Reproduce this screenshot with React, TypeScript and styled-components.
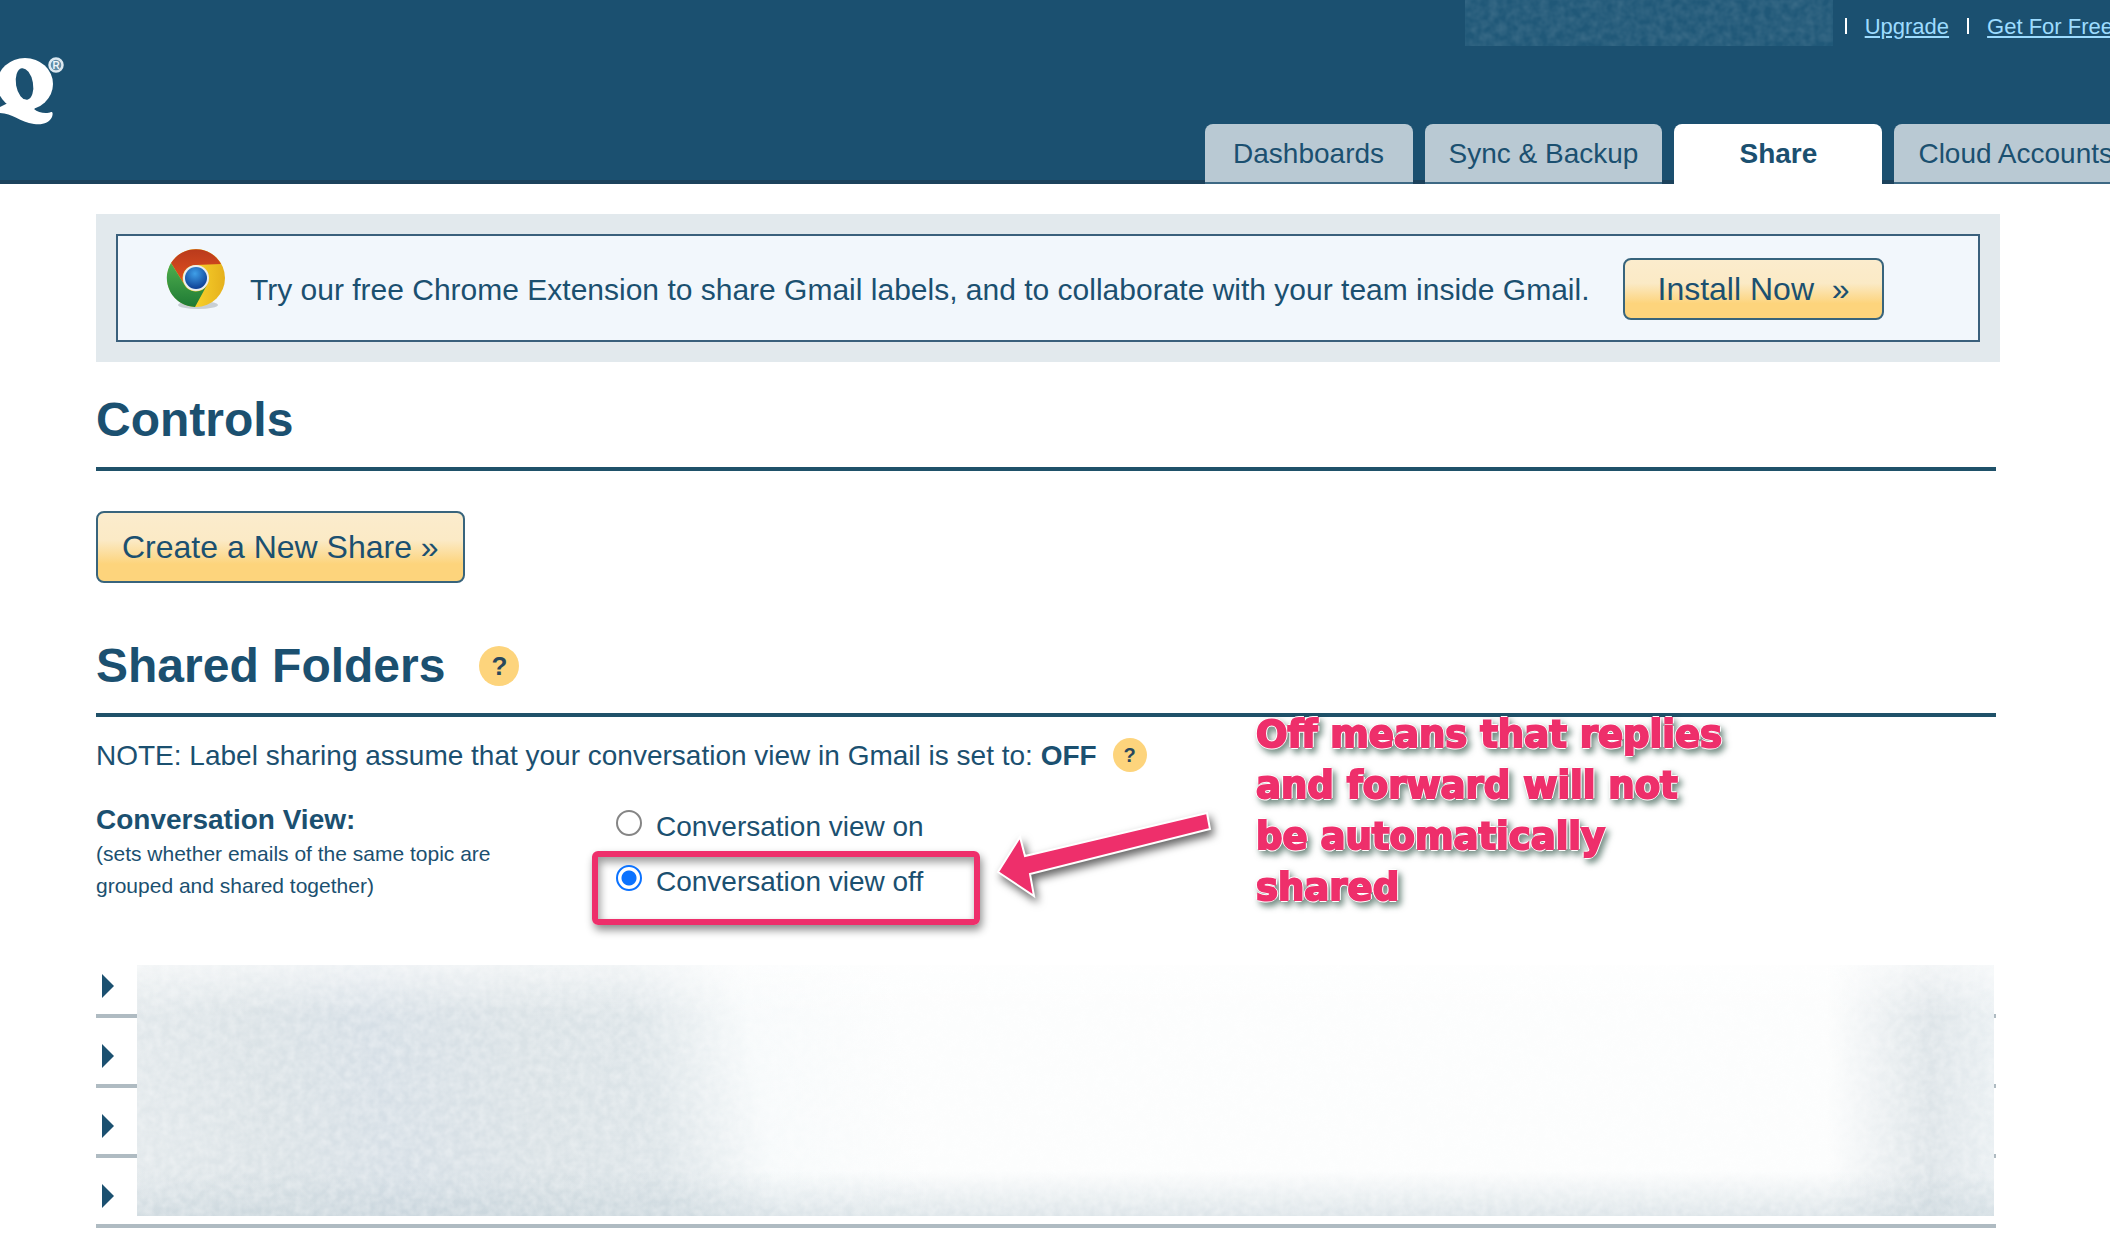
import React, { useState } from "react";
import styled, { createGlobalStyle, css } from "styled-components";

const navy = "#1b5070";
const pink = "#ee2f6b";
const amber = "#fdd47c";

const GlobalStyle = createGlobalStyle`
  *, *::before, *::after { box-sizing: border-box; }
  html, body { margin: 0; }
  body {
    background: #fff;
    color: ${navy};
    font-family: "Liberation Sans", Arial, Helvetica, sans-serif;
    font-size: 28px;
    line-height: 32px;
    overflow-x: hidden;
  }
`;

const Header = styled.header`
  display: flex;
  justify-content: space-between;
  height: 184px;
  background: ${navy};
  border-bottom: 4px solid #1c425c;
  overflow-x: clip;
`;

const LogoLink = styled.a`
  display: block;
  margin-top: 54px;
  height: 72px;
`;

const HeaderRight = styled.div`
  display: flex;
  flex-direction: column;
  justify-content: space-between;
  align-items: flex-end;
`;

const AccountBar = styled.div`
  display: flex;
  align-items: center;
  height: 46px;
  margin-right: -3px;
  font-size: 22px;
`;

const HiddenName = styled.div`
  align-self: stretch;
  width: 368px;
  margin-right: 12px;
  position: relative;
  overflow: hidden;
  background: #205878;
`;

const Separator = styled.span`
  width: 2px;
  height: 16px;
  margin-top: 6px;
  background: #fff;
`;

const AccountLink = styled.a`
  margin: 8px 18px 0;
  line-height: 24px;
  color: #9ddcff;
  white-space: nowrap;
  text-decoration: underline;
  text-underline-offset: 2px;
  &:last-child { margin-right: 0; }
`;

const Tabs = styled.nav`
  display: flex;
  gap: 12px;
  margin: 0 -27px -4px 0;
`;

const Tab = styled.a<{ $active?: boolean }>`
  min-width: 208px;
  height: 60px;
  padding: 14px 24px 0;
  border-radius: 8px 8px 0 0;
  border-bottom: 2px solid #3d6984;
  background: #b9c9d3;
  color: ${navy};
  text-align: center;
  text-decoration: none;
  white-space: nowrap;
  ${(p) =>
    p.$active &&
    css`
      background: #fff;
      border-bottom-color: #fff;
      font-weight: bold;
    `}
`;

const Main = styled.main`
  padding: 30px 110px 0 96px;
`;

const Banner = styled.aside`
  padding: 20px;
  background: #e2e9ed;
`;

const BannerInner = styled.div`
  display: flex;
  align-items: flex-start;
  height: 108px;
  border: 2px solid #3a607c;
  background: #f2f7fc;
  padding: 12px 48px 0;
`;

const BannerText = styled.p`
  margin: 26px 34px 0 22px;
  font-size: 30px;
  white-space: nowrap;
`;

const GoldButton = styled.button<{ $small?: boolean }>`
  height: ${(p) => (p.$small ? "62px" : "72px")};
  margin-top: ${(p) => (p.$small ? "10px" : "0")};
  padding: 0 ${(p) => (p.$small ? "32px" : "24px")};
  border: 2px solid #38647c;
  border-radius: 8px;
  background: linear-gradient(#fbeccd 0%, #fbeac6 40%, ${amber} 75%, ${amber} 100%);
  color: ${navy};
  font: inherit;
  font-size: 32px;
  white-space: pre;
`;

const Section = styled.section<{ $top: number }>`
  margin: ${(p) => p.$top}px 4px 0 0;
`;

const Heading = styled.div`
  display: flex;
  align-items: center;
  gap: 34px;
  height: 80px;
  padding-bottom: 18px;
  border-bottom: 4px solid #1f5169;
  h2 {
    margin: 0;
    font-size: 48px;
    line-height: 56px;
  }
`;

const HelpButton = styled.button<{ $small?: boolean }>`
  width: ${(p) => (p.$small ? 34 : 40)}px;
  height: ${(p) => (p.$small ? 34 : 40)}px;
  padding: 0;
  border: 0;
  border-radius: 50%;
  background: ${amber};
  color: #28485c;
  font: inherit;
  font-weight: bold;
  font-size: ${(p) => (p.$small ? 20 : 26)}px;
`;

const ControlsBody = styled.div`
  padding-top: 40px;
`;

const Note = styled.p`
  display: flex;
  align-items: flex-end;
  gap: 16px;
  margin: 0;
  padding-top: 21px;
`;

const Setting = styled.fieldset`
  display: grid;
  grid-template-columns: 496px 388px 1fr;
  min-height: 144px;
  margin: 32px 0 0;
  padding: 0;
  border: 0;
  position: relative;
`;

const SettingTitle = styled.div`
  strong { display: block; }
  small {
    display: block;
    width: 400px;
    padding-top: 2px;
    font-size: 21px;
    line-height: 32px;
  }
`;

const Options = styled.div`
  padding-top: 6px;
`;

const Option = styled.label<{ $marked?: boolean }>`
  display: flex;
  align-items: flex-start;
  height: ${(p) => (p.$marked ? 74 : 41)}px;
  padding: ${(p) => (p.$marked ? "8px 18px 0" : "0 18px 0 24px")};
  border: 0 solid ${pink};
  white-space: nowrap;
  ${(p) =>
    p.$marked &&
    css`
      border-width: 6px;
      border-radius: 6px;
      box-shadow: 2px 5px 8px rgba(0, 0, 0, 0.45), inset 2px 5px 8px rgba(0, 0, 0, 0.4);
    `}
  span { padding-top: 1px; }
  input {
    appearance: none;
    width: 26px;
    height: 26px;
    margin: 0 14px 0 0;
    border: 2px solid #858585;
    border-radius: 50%;
    background: #fff;
  }
  input:checked {
    border-color: #0b72ff;
    background: radial-gradient(circle, #0b72ff 0 7px, #fff 8px);
  }
`;

const ArrowSvg = styled.svg`
  position: absolute;
  left: 890px;
  top: 0;
  overflow: visible;
  filter: drop-shadow(3px 5px 4px rgba(0, 0, 0, 0.6));
`;

const Callout = styled.p`
  position: absolute;
  left: 1160px;
  top: -95px;
  margin: 0;
  white-space: pre-line;
  color: ${pink};
  font-family: "Arial Black", "DejaVu Sans", sans-serif;
  font-weight: 900;
  font-size: 37px;
  line-height: 51px;
  -webkit-text-stroke: 2px ${pink};
  text-shadow: 2px 0 #fff, -2px 0 #fff, 0 2px #fff, 0 -2px #fff, 1px 1px #fff, -1px 1px #fff, 1px -1px #fff, -1px -1px #fff;
  filter: drop-shadow(3px 4px 3px rgba(0, 45, 30, 0.55));
`;

const Folders = styled.div`
  position: relative;
`;

const FolderList = styled.ul`
  list-style: none;
  margin: 0;
  padding: 0;
`;

const FolderRow = styled.li`
  display: flex;
  align-items: flex-start;
  height: 70px;
  padding: 26px 0 0 6px;
  border-bottom: 4px solid #afbbc2;
`;

const Expand = styled.button`
  width: 12px;
  height: 24px;
  padding: 0;
  border: 0;
  background: ${navy};
  clip-path: polygon(0 0, 100% 50%, 0 100%);
`;

const Smudge = styled.div`
  position: absolute;
  left: 41px;
  right: 2px;
  top: 17px;
  height: 251px;
  overflow: hidden;
  background:
    linear-gradient(to top, rgba(190, 205, 213, 0.5), rgba(205, 217, 224, 0) 18%),
    linear-gradient(to bottom, rgba(255, 255, 255, 0.6), rgba(255, 255, 255, 0) 20%),
    linear-gradient(to right, rgba(255, 255, 255, 0) 91%, #dde4e8 96.5%, #e9eff2 100%),
    linear-gradient(80deg, #e3e9ec 0%, #dae2e6 8%, #d6dfe6 14%, #dae2e6 22%, #dce4e8 28%, #f7fafb 34%, #fcfdfd 42%, #fcfdfd 100%);
`;

const GrainSvg = styled.svg`
  position: absolute;
  inset: 0;
  width: 100%;
  height: 100%;
`;

function Grain({ id, opacity }: { id: string; opacity: number }) {
  return (
    <GrainSvg aria-hidden="true" opacity={opacity}>
      <filter id={id} x="0" y="0" width="100%" height="100%">
        <feTurbulence type="fractalNoise" baseFrequency="0.12" numOctaves="2" seed="4" />
        <feColorMatrix values="0 0 0 0 1  0 0 0 0 1  0 0 0 0 1  1.6 0 0 0 -0.4" />
      </filter>
      <rect width="100%" height="100%" filter={`url(#${id})`} />
    </GrainSvg>
  );
}

function Logo() {
  return (
    <svg width="66" height="72" viewBox="0 54 66 72" role="img" aria-label="Logo">
      <ellipse cx="25" cy="84" rx="28" ry="26" fill="#fff" />
      <ellipse cx="24.500" cy="84" rx="8.500" ry="16" fill={navy} transform="rotate(-10 24.500 84)" />
      <path
        d="M0 107 C2 106 4 105 6 104 L12 98 L42 102 L34 109 C38 113 47 114 51 112 C53 112 53 114 52 117 C49 123 43 125 34 124 C20 122 12 113 0 113 Z"
        fill="#fff"
      />
      <circle cx="56" cy="65" r="6.500" fill="#5f8aa4" stroke="#dce8f0" strokeWidth="2.500" />
      <text x="56" y="69" textAnchor="middle" fontSize="10" fontWeight="bold" fill="#eef5fa">R</text>
    </svg>
  );
}

function ChromeIcon() {
  return (
    <svg width="62" height="64" viewBox="0 0 62 64" aria-hidden="true">
      <defs>
        <linearGradient id="cr" x1="0" y1="0" x2="0" y2="1">
          <stop offset="0" stopColor="#b93a1c" />
          <stop offset="1" stopColor="#e4521f" />
        </linearGradient>
        <linearGradient id="cg" x1="0" y1="0" x2="0" y2="1">
          <stop offset="0" stopColor="#4fae4e" />
          <stop offset="1" stopColor="#1e7a34" />
        </linearGradient>
        <linearGradient id="cy" x1="0" y1="0" x2="1" y2="0">
          <stop offset="0.400" stopColor="#fbd62e" />
          <stop offset="1" stopColor="#e5b01c" />
        </linearGradient>
        <radialGradient id="cb" cx="0.45" cy="0.3" r="0.7">
          <stop offset="0" stopColor="#3f9fe8" />
          <stop offset="1" stopColor="#0d3f94" />
        </radialGradient>
      </defs>
      <ellipse cx="32" cy="57" rx="20" ry="4" fill="#8a949c" opacity="0.4" />
      <circle cx="30" cy="30" r="29" fill="url(#cy)" />
      <path d="M5 15 A29 29 0 0 1 55 16 L30 17 A13 13 0 0 0 18 36 Z" fill="url(#cr)" />
      <path d="M5 15 A29 29 0 0 0 29 59 L41 37 A13 13 0 0 1 18 36 Z" fill="url(#cg)" />
      <circle cx="30" cy="30" r="13" fill="#e9eef2" />
      <circle cx="30" cy="30" r="11" fill="url(#cb)" />
    </svg>
  );
}

const options = [
  { value: "on", text: "Conversation view on" },
  { value: "off", text: "Conversation view off" },
];

export default function App() {
  const [view, setView] = useState("off");
  return (
    <>
      <GlobalStyle />
      <Header>
        <LogoLink href="#"><Logo /></LogoLink>
        <HeaderRight>
          <AccountBar>
            <HiddenName><Grain id="nameGrain" opacity={0.1} /></HiddenName>
            <Separator />
            <AccountLink href="#">Upgrade</AccountLink>
            <Separator />
            <AccountLink href="#">Get For Free</AccountLink>
          </AccountBar>
          <Tabs>
            <Tab href="#">Dashboards</Tab>
            <Tab href="#">Sync &amp; Backup</Tab>
            <Tab href="#" $active aria-current="page">Share</Tab>
            <Tab href="#">Cloud Accounts</Tab>
          </Tabs>
        </HeaderRight>
      </Header>
      <Main>
        <Banner>
          <BannerInner>
            <ChromeIcon />
            <BannerText>
              Try our free Chrome Extension to share Gmail labels, and to collaborate with your team inside Gmail.
            </BannerText>
            <GoldButton $small>{"Install Now  »"}</GoldButton>
          </BannerInner>
        </Banner>
        <Section $top={29}>
          <Heading><h2>Controls</h2></Heading>
          <ControlsBody><GoldButton>Create a New Share »</GoldButton></ControlsBody>
        </Section>
        <Section $top={54}>
          <Heading>
            <h2>Shared Folders</h2>
            <HelpButton aria-label="Help with shared folders">?</HelpButton>
          </Heading>
          <Note>
            <span>
              NOTE: Label sharing assume that your conversation view in Gmail is set to: <b>OFF</b>
            </span>
            <HelpButton $small aria-label="Help with conversation view">?</HelpButton>
          </Note>
          <Setting>
            <SettingTitle>
              <strong>Conversation View:</strong>
              <small>(sets whether emails of the same topic are grouped and shared together)</small>
            </SettingTitle>
            <Options role="radiogroup" aria-label="Conversation View">
              {options.map((o) => (
                <Option key={o.value} $marked={o.value === "off"}>
                  <input
                    type="radio"
                    name="view"
                    value={o.value}
                    checked={view === o.value}
                    onChange={() => setView(o.value)}
                  />
                  <span>{o.text}</span>
                </Option>
              ))}
            </Options>
            <ArrowSvg width="240" height="100" viewBox="986 803 240 100" aria-hidden="true">
              <path
                d="M998 871 L1020 836 L1025 855 L1207 812 L1210 828 L1030 873 L1034 895 Z"
                fill={pink}
                stroke="#fff"
                strokeWidth="2"
              />
            </ArrowSvg>
            <Callout>{"Off means that replies\nand forward will not\nbe automatically\nshared"}</Callout>
          </Setting>
          <Folders>
            <FolderList>
              {[1, 2, 3, 4].map((n) => (
                <FolderRow key={n}><Expand aria-label={`Expand folder ${n}`} /></FolderRow>
              ))}
            </FolderList>
            <Smudge><Grain id="listGrain" opacity={0.35} /></Smudge>
          </Folders>
        </Section>
      </Main>
    </>
  );
}
